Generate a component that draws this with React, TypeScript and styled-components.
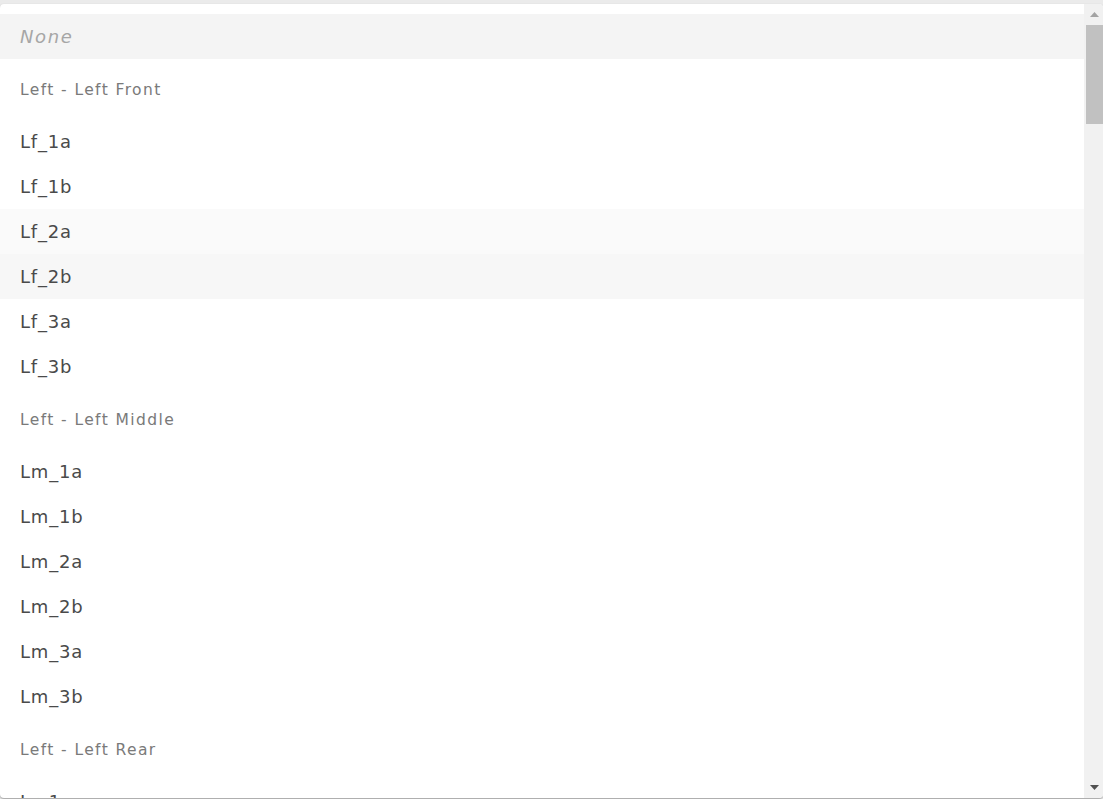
import React from "react";
import styled, { createGlobalStyle } from "styled-components";

const Global = createGlobalStyle`
  html, body { margin: 0; padding: 0; height: 100%; overflow: hidden; }
  body { background: #ebebeb; font-family: "DejaVu Sans", "Noto Sans", sans-serif; }
  #root { height: 100%; }
`;

const Page = styled.div`
  height: 100%;
  box-sizing: border-box;
  padding: 4px 0 1px;
  display: flex;
  flex-direction: column;
`;

const Panel = styled.div`
  flex: 1;
  min-height: 0;
  display: flex;
  background: #fff;
  border-radius: 4px;
  box-shadow: 0 1px 2px rgba(0, 0, 0, 0.35);
  overflow: hidden;
`;

const Viewport = styled.div`
  flex: 1;
  min-width: 0;
  overflow: hidden;
`;

const ScrollTrack = styled.div`
  width: 19px;
  flex: none;
  display: flex;
  flex-direction: column;
  background: #f1f1f1;
`;

const ScrollButton = styled.div`
  height: 21px;
  flex: none;
  display: flex;
  align-items: center;
  justify-content: center;
  padding-left: 1px;
`;

const Thumb = styled.div`
  height: 99px;
  margin-left: 2px;
  background: #c1c1c1;
  flex: none;
`;

const Spacer = styled.div`
  flex: 1;
`;

const List = styled.ul`
  list-style: none;
  margin: 0;
  padding: 10px 0 10px;
`;

const Item = styled.li<{ $bg?: string; $placeholder?: boolean }>`
  height: 45px;
  display: flex;
  align-items: center;
  padding: 0 20px;
  box-sizing: border-box;
  background: ${(p) => p.$bg || "transparent"};
  color: ${(p) => (p.$placeholder ? "#a6a6a6" : "#4a4a4a")};
  font-style: ${(p) => (p.$placeholder ? "italic" : "normal")};
  font-size: 18px;
  font-weight: 400;
  letter-spacing: ${(p) => (p.$placeholder ? "1.6px" : "0.8px")};
`;

const Header = styled.li`
  height: 60px;
  display: flex;
  align-items: center;
  padding: 0 20px;
  box-sizing: border-box;
  color: #7a7a7a;
  font-size: 15.5px;
  letter-spacing: 1.4px;
  padding-top: 1px;
`;

type Group = { title: string; items: string[] };

const groups: Group[] = [
  { title: "Left - Left Front", items: ["Lf_1a", "Lf_1b", "Lf_2a", "Lf_2b", "Lf_3a", "Lf_3b"] },
  { title: "Left - Left Middle", items: ["Lm_1a", "Lm_1b", "Lm_2a", "Lm_2b", "Lm_3a", "Lm_3b"] },
  { title: "Left - Left Rear", items: ["Lr_1a"] },
];

const highlight: Record<string, string> = {
  Lf_2a: "#fafafa",
  Lf_2b: "#f7f7f7",
};

export default function App() {
  return (
    <>
      <Global />
      <Page>
        <Panel>
          <Viewport>
            <List>
              <Item $bg="#f4f4f4" $placeholder>None</Item>
              {groups.map((g) => (
                <React.Fragment key={g.title}>
                  <Header>{g.title}</Header>
                  {g.items.map((it) => (
                    <Item key={it} $bg={highlight[it]}>{it}</Item>
                  ))}
                </React.Fragment>
              ))}
            </List>
          </Viewport>
          <ScrollTrack>
            <ScrollButton>
              <svg width="9" height="5" viewBox="0 0 9 5">
                <path d="M0 5 L4.5 0 L9 5 Z" fill="#a3a3a3" />
              </svg>
            </ScrollButton>
            <Thumb />
            <Spacer />
            <ScrollButton>
              <svg width="9" height="5" viewBox="0 0 9 5">
                <path d="M0 0 L4.5 5 L9 0 Z" fill="#505050" />
              </svg>
            </ScrollButton>
          </ScrollTrack>
        </Panel>
      </Page>
    </>
  );
}
